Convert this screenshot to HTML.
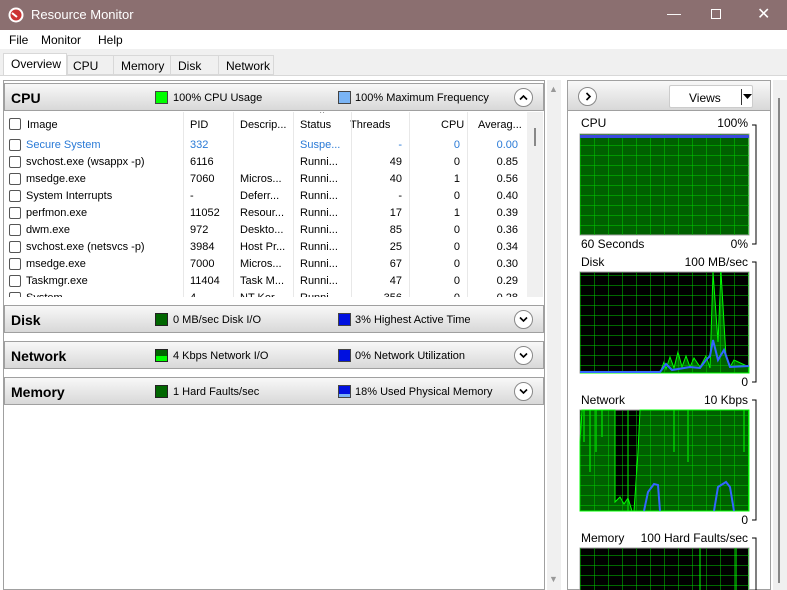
<!DOCTYPE html>
<html><head><meta charset="utf-8"><style>
*{margin:0;padding:0;box-sizing:border-box}
body{width:787px;height:590px;overflow:hidden;background:#f0f0f0;font-family:"Liberation Sans",sans-serif;font-size:11px;color:#000;position:relative}
.abs{position:absolute}
.title{left:0;top:0;width:787px;height:30px;background:#8b6f70;color:#fff;font-size:13px}
.menu{left:0;top:30px;width:787px;height:19px;background:#fff;font-size:12px}
.hdr{left:4px;width:540px;height:28px;border:1px solid #a0a0a0;background:linear-gradient(#f8f8f8,#d8d8d8)}
.hdr b{position:absolute;left:6px;top:6px;font-size:14px}
.hdr .t{position:absolute;top:8px;font-size:11px}
.sw{position:absolute;top:7px;width:13px;height:13px;border:1px solid #444}
.btn{position:absolute;right:10px;top:4px;width:19px;height:19px;border-radius:50%;border:1px solid #888;background:#fff}
.btn svg{position:absolute;left:4px;top:5px}
.row{position:absolute;left:0;height:17px;width:522px}
.row span{position:absolute;top:3px;white-space:nowrap}
.cb{position:absolute;left:5px;top:3px;width:12px;height:12px;border:1px solid #555;border-radius:2px;background:#fff}
.blue{color:#2a7ad6}
</style></head><body>
<div class="abs title">
 <svg class="abs" style="left:8px;top:7px" width="16" height="16"><circle cx="8" cy="8" r="7.5" fill="#fff"/><circle cx="8" cy="8" r="5.5" fill="#c33"/><path d="M4 6 L9 10" stroke="#fff" stroke-width="2"/></svg>
 <span class="abs" style="left:31px;top:7px">Resource Monitor</span>
 <span class="abs" style="left:667px;top:5px;font-size:14px">—</span>
 <div class="abs" style="left:711px;top:9px;width:10px;height:10px;border:1px solid #fff"></div>
 <span class="abs" style="left:757px;top:4px;font-size:16px">✕</span>
</div>
<div class="abs menu"><span class="abs" style="left:9px;top:3px">File</span><span class="abs" style="left:41px;top:3px">Monitor</span><span class="abs" style="left:98px;top:3px">Help</span></div>
<div class="abs" style="left:3px;top:53px;width:64px;height:23px;background:#fff;border:1px solid #d8d8d8;border-bottom:none"><span class="abs" style="left:7px;top:3px;font-size:12px">Overview</span></div>
<div class="abs" style="left:67px;top:55px;width:47px;height:20px;border:1px solid #d8d8d8;background:#f0f0f0"><span class="abs" style="left:5px;top:3px;font-size:12px">CPU</span></div>
<div class="abs" style="left:113px;top:55px;width:58px;height:20px;border:1px solid #d8d8d8"><span class="abs" style="left:7px;top:3px;font-size:12px">Memory</span></div>
<div class="abs" style="left:170px;top:55px;width:49px;height:20px;border:1px solid #d8d8d8"><span class="abs" style="left:7px;top:3px;font-size:12px">Disk</span></div>
<div class="abs" style="left:218px;top:55px;width:56px;height:20px;border:1px solid #d8d8d8"><span class="abs" style="left:7px;top:3px;font-size:12px">Network</span></div>
<div class="abs" style="left:0;top:75px;width:787px;height:515px;background:#fff;border-top:1px solid #d8d8d8"></div>
<div class="abs" style="left:3px;top:80px;width:542px;height:510px;background:#fff;border:1px solid #a0a0a0"></div>

<div class="abs hdr" style="top:83px"><b>CPU</b>
 <div class="sw" style="left:150px;background:#00ff00"></div><span class="t" style="left:168px">100% CPU Usage</span>
 <div class="sw" style="left:333px;background:#7ab4f5"></div><span class="t" style="left:350px">100% Maximum Frequency</span>
 <div class="btn"><svg width="9" height="7"><path d="M1 5.5L4.5 2L8 5.5" fill="none" stroke="#000" stroke-width="1.6"/></svg></div></div>
<div class="abs" style="left:4px;top:112px;width:523px;height:185px;background:#fff;overflow:hidden">
 <div class="row" style="top:2px;height:20px">
  <div class="cb" style="top:4px"></div><span style="left:23px;top:5px">Image</span>
  <span style="left:186px;top:5px">PID</span><span style="left:236px;top:5px">Descrip...</span><span style="left:296px;top:5px">Status</span>
  <span style="left:346px;top:5px">Threads</span><span style="left:437px;top:5px">CPU</span><span style="left:474px;top:5px">Averag...</span>
  <span style="left:316px;top:-6px;font-size:9px;color:#666">^</span>
 </div>
 <div class="abs" style="left:179px;top:0;width:1px;height:185px;background:#e8e8e8"></div>
 <div class="abs" style="left:229px;top:0;width:1px;height:185px;background:#e8e8e8"></div>
 <div class="abs" style="left:289px;top:0;width:1px;height:185px;background:#e8e8e8"></div>
 <div class="abs" style="left:347px;top:0;width:1px;height:185px;background:#e8e8e8"></div>
 <div class="abs" style="left:405px;top:0;width:1px;height:185px;background:#e8e8e8"></div>
 <div class="abs" style="left:463px;top:0;width:1px;height:185px;background:#e8e8e8"></div>
 <div id="rows"></div>
</div>
<div class="abs" style="left:527px;top:112px;width:16px;height:185px;background:#f0f0f0"><div class="abs" style="left:7px;top:16px;width:2px;height:18px;background:#888"></div></div>
<script>
var d=[["Secure System","332","","Suspe...","-","0","0.00",1],["svchost.exe (wsappx -p)","6116","","Runni...","49","0","0.85"],["msedge.exe","7060","Micros...","Runni...","40","1","0.56"],["System Interrupts","-","Deferr...","Runni...","-","0","0.40"],["perfmon.exe","11052","Resour...","Runni...","17","1","0.39"],["dwm.exe","972","Deskto...","Runni...","85","0","0.36"],["svchost.exe (netsvcs -p)","3984","Host Pr...","Runni...","25","0","0.34"],["msedge.exe","7000","Micros...","Runni...","67","0","0.30"],["Taskmgr.exe","11404","Task M...","Runni...","47","0","0.29"],["System","4","NT Ker...","Runni...","356","0","0.28"]];
var h="";d.forEach(function(r,i){var c=r[7]?' class="blue"':'';h+='<div class="row" style="top:'+(24+i*17)+'px"><div class="cb"></div><span'+c+' style="left:22px">'+r[0]+'</span><span'+c+' style="left:186px">'+r[1]+'</span><span style="left:236px">'+r[2]+'</span><span'+c+' style="left:296px">'+r[3]+'</span><span'+c+' style="right:124px">'+r[4]+'</span><span'+c+' style="right:66px">'+r[5]+'</span><span'+c+' style="right:8px">'+r[6]+'</span></div>'});document.getElementById("rows").innerHTML=h;
</script>
<div class="abs hdr" style="top:305px"><b>Disk</b>
 <div class="sw" style="left:150px;background:#060;border-color:#222"></div><span class="t" style="left:168px">0 MB/sec Disk I/O</span>
 <div class="sw" style="left:333px;background:#0010e0"></div><span class="t" style="left:350px">3% Highest Active Time</span><div class="btn"><svg width="9" height="7"><path d="M1 1.5L4.5 5L8 1.5" fill="none" stroke="#000" stroke-width="1.6"/></svg></div></div>
<div class="abs hdr" style="top:341px"><b>Network</b>
 <div class="sw" style="left:150px;background:linear-gradient(#060 55%,#0f0 55%);border-color:#222"></div><span class="t" style="left:168px">4 Kbps Network I/O</span>
 <div class="sw" style="left:333px;background:#0010e0"></div><span class="t" style="left:350px">0% Network Utilization</span><div class="btn"><svg width="9" height="7"><path d="M1 1.5L4.5 5L8 1.5" fill="none" stroke="#000" stroke-width="1.6"/></svg></div></div>
<div class="abs hdr" style="top:377px"><b>Memory</b>
 <div class="sw" style="left:150px;background:#060;border-color:#222"></div><span class="t" style="left:168px">1 Hard Faults/sec</span>
 <div class="sw" style="left:333px;background:linear-gradient(#0010e0 75%,#7ab4f5 75%)"></div><span class="t" style="left:350px">18% Used Physical Memory</span><div class="btn"><svg width="9" height="7"><path d="M1 1.5L4.5 5L8 1.5" fill="none" stroke="#000" stroke-width="1.6"/></svg></div></div>

<div class="abs" style="left:547px;top:80px;width:14px;height:510px;background:#f0f0f0"><span class="abs" style="left:2px;top:4px;font-size:9px;color:#999">▲</span><span class="abs" style="left:2px;top:494px;font-size:9px;color:#999">▼</span></div>
<div class="abs" style="left:567px;top:80px;width:204px;height:510px;background:#fff;border:1px solid #a0a0a0"></div>
<div class="abs" style="left:568px;top:81px;width:202px;height:30px;background:linear-gradient(#f8f8f8,#d8d8d8);border-bottom:1px solid #a0a0a0">
 <div class="abs" style="left:10px;top:6px;width:19px;height:19px;border-radius:50%;border:1px solid #888;background:#fff"><svg class="abs" style="left:6px;top:4px" width="7" height="9"><path d="M1.5 1L5 4.5L1.5 8" fill="none" stroke="#000" stroke-width="1.6"/></svg></div>
 <div class="abs" style="left:101px;top:4px;width:84px;height:23px;border:1px solid #ccc;background:#fff;border-radius:2px"><span class="abs" style="left:19px;top:5px;font-size:12px">Views</span><div class="abs" style="left:71px;top:3px;width:1px;height:16px;background:#333"></div><svg class="abs" style="left:73px;top:8px" width="9" height="6"><path d="M0 0H9L4.5 5Z" fill="#000"/></svg></div>
</div>
<div class="abs" style="left:773px;top:80px;width:14px;height:510px;background:#f0f0f0"><div class="abs" style="left:5px;top:18px;width:2px;height:485px;background:#888"></div></div>
<svg class="abs" style="left:568px;top:112px" width="202" height="478" font-family="Liberation Sans" font-size="12">
<defs><pattern id="g" x="12" y="23" width="14" height="10" patternUnits="userSpaceOnUse"><path d="M0 0H14M0 0V10" stroke="#00d000" stroke-width="1"/></pattern></defs>
<text x="13" y="15">CPU</text><text x="180" y="15" text-anchor="end">100%</text>
<rect x="12" y="22" width="169" height="101" fill="#006000" stroke="#a0a0a0"/><rect x="12" y="22" width="169" height="101" fill="url(#g)"/><rect x="12" y="23" width="169" height="3" fill="#3a4ae0"/>
<text x="13" y="136">60 Seconds</text><text x="180" y="136" text-anchor="end">0%</text>
<path d="M184 13H188V132H184" fill="none" stroke="#000"/>
<text x="13" y="154">Disk</text><text x="180" y="154" text-anchor="end">100 MB/sec</text>
<rect x="12" y="160" width="169" height="101" fill="#000" stroke="#a0a0a0"/>
<path d="M12 261 L92 261 L96 250 L98 257 L102 245 L106 256 L110 240 L114 255 L118 244 L122 255 L126 246 L132 255 L138 244 L142 256 L145 160 L150 230 L153 160 L158 245 L162 255 L166 248 L181 255 L181 261Z" fill="#006000" stroke="#00ff00"/>
<rect x="12" y="160" width="169" height="101" fill="url(#g)"/>
<path d="M12 260H92L98 252L104 258L122 255L132 256L138 248L142 244L145 228L150 248L156 238L162 255L181 254" fill="none" stroke="#3366ff" stroke-width="2"/>
<text x="180" y="274" text-anchor="end">0</text>
<path d="M184 150H188V270H184" fill="none" stroke="#000"/>
<text x="13" y="292">Network</text><text x="180" y="292" text-anchor="end">10 Kbps</text>
<rect x="12" y="298" width="169" height="101" fill="#000" stroke="#a0a0a0"/>
<path d="M12 399 L12 330 L14 298 L47 298 L47 390 L52 385 L56 392 L60 386 L64 399 L66 399 L70 340 L72 298 L181 298 L181 399Z" fill="#006000" stroke="#00ff00"/>
<path d="M16 298V330M22 298V360M28 298V340M34 298V325M60 298V399M106 298V340M120 298V350M176 298V340" stroke="#00ff00"/>
<rect x="12" y="298" width="169" height="101" fill="url(#g)"/>
<path d="M76 399L80 380L86 372L90 373L92 399M146 399L150 375L158 370L162 375L166 399" fill="none" stroke="#3366ff" stroke-width="2"/>
<text x="180" y="412" text-anchor="end">0</text>
<path d="M184 288H188V408H184" fill="none" stroke="#000"/>
<text x="13" y="430">Memory</text><text x="180" y="430" text-anchor="end">100 Hard Faults/sec</text>
<rect x="12" y="436" width="169" height="60" fill="#000" stroke="#a0a0a0"/>
<rect x="12" y="436" width="169" height="60" fill="url(#g)"/>
<path d="M132 478V436M168 478V436" stroke="#00ff00"/>
<path d="M184 426H188V478" fill="none" stroke="#000"/>
</svg>
</body></html>
